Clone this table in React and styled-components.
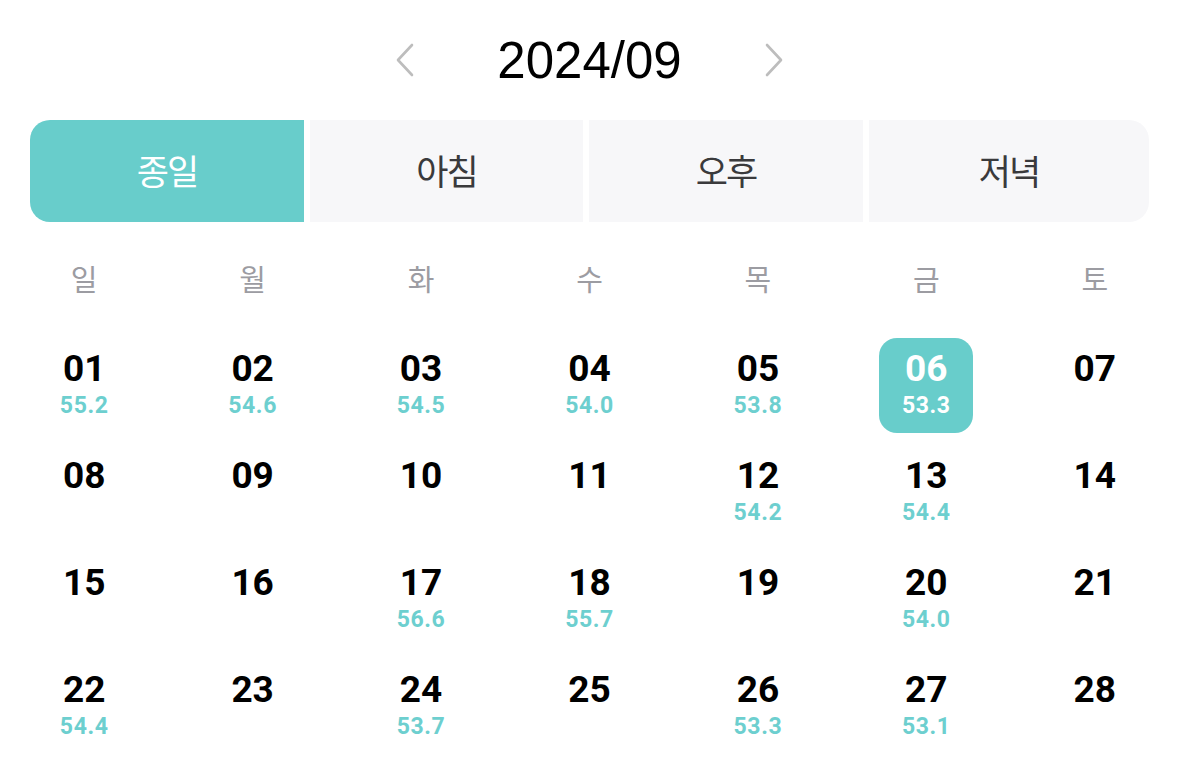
import React from 'react';
import styled, { createGlobalStyle } from 'styled-components';

const GlobalStyle = createGlobalStyle`
    body {
        margin: 0;
        background: #ffffff;
        font-family: "Noto Sans CJK KR", "Noto Sans", sans-serif;
    }
`

const Container = styled.div`
    width: 1179px;
    height: 764px;
    overflow: hidden;
    background: #ffffff;
`
const Header = styled.div`
    height: 120px;
    display: flex;
    align-items: center;
    justify-content: center;
    gap: 83px;
`
const Arrow = styled.button`
    border: none;
    background: transparent;
    padding: 0;
    width: 18px;
    height: 34px;
    display: flex;
    cursor: pointer;
`
const Month = styled.h1`
    margin: 0;
    font-family: "Liberation Sans", Arial, sans-serif;
    font-weight: 400;
    font-size: 51px;
    color: #000000;
    line-height: 1;
`
const Tabs = styled.div`
    margin: 0 30px;
    display: grid;
    grid-template-columns: 274px 273px 274px 280px;
    gap: 6px;
    height: 102px;
`
const Tab = styled.button`
    border: none;
    cursor: pointer;
    padding: 0 0 4px;
    font-family: "Noto Sans CJK KR", sans-serif;
    font-size: 35px;
    letter-spacing: -2px;
    font-weight: 400;
    background: ${props => props.active ? "#68cdcb" : "#f7f7f9"};
    color: ${props => props.active ? "#ffffff" : "#3a3a3c"};
    border-radius: 0;
    &:first-child {
        border-radius: 20px 0 0 20px;
    }
    &:last-child {
        border-radius: 0 20px 20px 0;
    }
`
const WeekRow = styled.div`
    display: grid;
    grid-template-columns: repeat(7, 1fr);
    padding: 36px 0 40px;
`
const WeekDay = styled.span`
    text-align: center;
    font-size: 29px;
    line-height: 40px;
    color: #9c9ca2;
`
const Days = styled.div`
    display: grid;
    grid-template-columns: repeat(7, 1fr);
    grid-auto-rows: 95px;
    row-gap: 12px;
    justify-items: center;
`
const Day = styled.div`
    width: 94px;
    height: 95px;
    box-sizing: border-box;
    padding-top: 13px;
    border-radius: 18px;
    display: flex;
    flex-direction: column;
    align-items: center;
    background: ${props => props.selected ? "#68cdcb" : "transparent"};
    font-family: Roboto, "Noto Sans", sans-serif;
    font-weight: 700;
`
const DayNum = styled.span`
    font-size: 37px;
    line-height: 36px;
    color: ${props => props.selected ? "#ffffff" : "#000000"};
`
const DayValue = styled.span`
    margin-top: 7px;
    font-size: 23px;
    line-height: 24px;
    letter-spacing: 0.6px;
    color: ${props => props.selected ? "#ffffff" : "#6dcfcf"};
`

const Chevron = ({ dir }) => (
    <svg width="18" height="34" viewBox="0 0 18 34" fill="none">
        <path
            d={dir === "left" ? "M16 2 L2 17 L16 32" : "M2 2 L16 17 L2 32"}
            stroke="#bdbdbd"
            strokeWidth="2.6"
            strokeLinecap="round"
            strokeLinejoin="round"
        />
    </svg>
)

const tabs = ["종일", "아침", "오후", "저녁"]
const weekDays = ["일", "월", "화", "수", "목", "금", "토"]
const values = {
    1: "55.2", 2: "54.6", 3: "54.5", 4: "54.0", 5: "53.8", 6: "53.3",
    12: "54.2", 13: "54.4",
    17: "56.6", 18: "55.7", 20: "54.0",
    22: "54.4", 24: "53.7", 26: "53.3", 27: "53.1",
}

const App = () => {
    const days = Array.from({ length: 28 }, (_, i) => i + 1)
    return (
        <Container>
            <GlobalStyle />
            <Header>
                <Arrow><Chevron dir="left" /></Arrow>
                <Month>2024/09</Month>
                <Arrow><Chevron dir="right" /></Arrow>
            </Header>
            <Tabs>
                {tabs.map((t, i) => (
                    <Tab key={t} active={i === 0}>{t}</Tab>
                ))}
            </Tabs>
            <WeekRow>
                {weekDays.map(d => <WeekDay key={d}>{d}</WeekDay>)}
            </WeekRow>
            <Days>
                {days.map(d => {
                    const selected = d === 6
                    return (
                        <Day key={d} selected={selected}>
                            <DayNum selected={selected}>{String(d).padStart(2, "0")}</DayNum>
                            {values[d] && <DayValue selected={selected}>{values[d]}</DayValue>}
                        </Day>
                    )
                })}
            </Days>
        </Container>
    );
};

export default App;
